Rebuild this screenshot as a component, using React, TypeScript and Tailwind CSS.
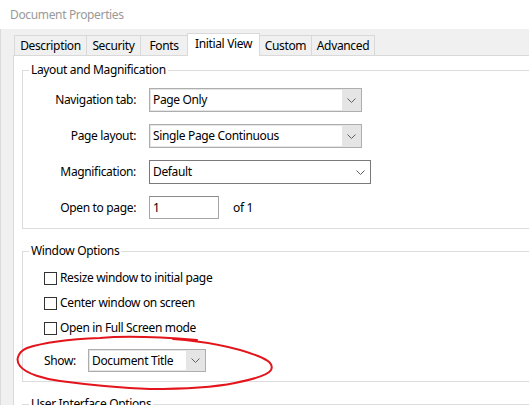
import type { ReactNode } from "react";

const TABS = [
  { label: "Description", w: "w-[72px]" },
  { label: "Security", w: "w-[54px]" },
  { label: "Fonts", w: "w-[47px]" },
  { label: "Initial View", w: "w-[73px]", active: true },
  { label: "Custom", w: "w-[51px]" },
  { label: "Advanced", w: "w-[64px]", last: true },
];

export default function App() {
  return (
    <div className="relative h-[405px] w-[529px] overflow-hidden bg-[#f0f0f0] font-['Noto_Sans',sans-serif] text-[12px] leading-[16px] tracking-[-0.35px] text-black">
      {/* Barra de título */}
      <div className="flex h-[29px] items-center bg-white pl-[10px] text-[#999]">
        Document Properties
      </div>

      <div className="border-l border-[#dadada]">
        {/* Abas */}
        <div className="flex h-[26px] items-end pl-[13px] pt-[4px]">
          {TABS.map((t, i) => {
            const prevActive = i > 0 && TABS[i - 1].active;
            if (t.active) {
              return (
                <div
                  key={t.label}
                  className={`relative z-10 -mb-px flex h-[23px] ${t.w} items-center justify-center border-x border-t border-[#d9d9d9] bg-white pb-[2px]`}
                >
                  {t.label}
                </div>
              );
            }
            return (
              <div
                key={t.label}
                className={`flex h-[20px] ${t.w} items-center justify-center border-t border-[#d9d9d9] ${prevActive ? "" : "border-l"} ${t.last ? "border-r" : ""}`}
              >
                {t.label}
              </div>
            );
          })}
        </div>

        {/* Painel */}
        <div className="ml-[12px] h-[360px] border-l border-t border-[#d9d9d9] bg-white pl-[8px] pt-[6px]">
          <GroupBox titulo="Layout and Magnification" corpo="pt-[10px] pb-[9px]">
            <div className="flex flex-col gap-[12px]">
              <Linha label="Navigation tab:">
                <Combo texto="Page Only" largura="w-[213px]" />
              </Linha>
              <Linha label="Page layout:">
                <Combo texto="Single Page Continuous" largura="w-[213px]" />
              </Linha>
              <Linha label="Magnification:">
                <div className="flex h-[24px] w-[222px] items-center justify-between border border-[#7a7a7a] bg-white pl-[3px] pr-[5px]">
                  <span>Default</span>
                  <Chevron />
                </div>
              </Linha>
              <Linha label="Open to page:">
                <div className="flex items-center">
                  <div className="flex h-[23px] w-[70px] items-center border border-[#a6a6a6] border-t-[#8a8a8a] pl-[3px]">
                    1
                  </div>
                  <span className="ml-[14px]">of 1</span>
                </div>
              </Linha>
            </div>
          </GroupBox>

          <GroupBox titulo="Window Options" className="mt-[14px]" corpo="pl-[21px] pt-[11px] pb-[9px]">
            <div className="flex flex-col gap-[9px]">
              <Caixa texto="Resize window to initial page" />
              <Caixa texto="Center window on screen" />
              <Caixa texto="Open in Full Screen mode" />
            </div>
            <div className="mt-[13px] flex items-center">
              <span className="w-[44px]">Show:</span>
              <Combo texto="Document Title" largura="w-[118px]" altura="h-[23px]" />
            </div>
          </GroupBox>

          <GroupBox titulo="User Interface Options" className="mt-[14px]" corpo="h-[60px]">
            <div />
          </GroupBox>
        </div>
      </div>

      {/* Marcação em vermelho */}
      <svg
        className="pointer-events-none absolute left-0 top-0"
        width="529"
        height="405"
        viewBox="0 0 529 405"
        fill="none"
      >
        <path
          d="M197 340 C160 337 122 336 100 338 C75 339 45 342 27 348 C18 352 15 360 20 366 C26 374 45 379 60 381 C90 385 120 388 150 389 C180 389 215 387 235 383 C255 379 268 375 271 370 C274 364 268 360 258 356 C240 349 212 342 173 339"
          stroke="#e3141b"
          strokeWidth="2"
          strokeLinecap="round"
          strokeLinejoin="round"
        />
      </svg>
    </div>
  );
}

function GroupBox({
  titulo,
  className = "",
  corpo = "",
  children,
}: {
  titulo: string;
  className?: string;
  corpo?: string;
  children: ReactNode;
}) {
  return (
    <fieldset className={`w-[600px] border border-[#dcdcdc] ${className}`}>
      <legend className="ml-[6px] px-[2px] leading-[16px]">{titulo}</legend>
      <div className={corpo}>{children}</div>
    </fieldset>
  );
}

function Linha({ label, children }: { label: string; children: ReactNode }) {
  return (
    <div className="flex items-center">
      <span className="w-[113px] text-right">{label}</span>
      <div className="ml-[13px]">{children}</div>
    </div>
  );
}

function Combo({
  texto,
  largura,
  altura = "h-[24px]",
}: {
  texto: string;
  largura: string;
  altura?: string;
}) {
  return (
    <div className={`flex ${altura} ${largura} border border-[#adadad] bg-[#e5e5e5] p-[1px]`}>
      <div className="flex flex-1 items-center bg-white pl-[2px]">{texto}</div>
      <div className="flex w-[18px] items-center justify-center">
        <Chevron />
      </div>
    </div>
  );
}

function Caixa({ texto }: { texto: string }) {
  return (
    <label className="flex h-[16px] items-center">
      <span className="h-[13px] w-[13px] border border-[#333] bg-white" />
      <span className="ml-[3px]">{texto}</span>
    </label>
  );
}

function Chevron() {
  return (
    <svg width="9" height="5" viewBox="0 0 9 5" fill="none">
      <path d="M0.5 0.5 L4.5 4.5 L8.5 0.5" stroke="#606060" strokeWidth="1" />
    </svg>
  );
}
